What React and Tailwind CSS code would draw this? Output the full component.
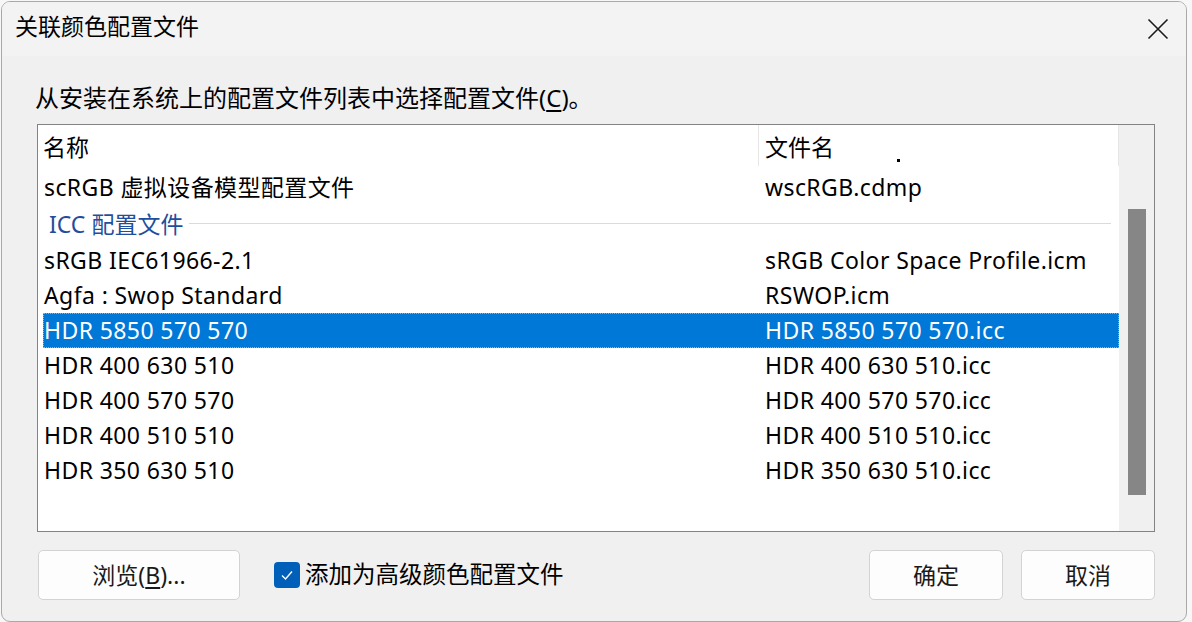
const rows = [
    { name: 'sRGB IEC61966-2.1', file: 'sRGB Color Space Profile.icm' },
    { name: 'Agfa : Swop Standard', file: 'RSWOP.icm' },
    { name: 'HDR 5850 570 570', file: 'HDR 5850 570 570.icc', selected: true },
    { name: 'HDR 400 630 510', file: 'HDR 400 630 510.icc' },
    { name: 'HDR 400 570 570', file: 'HDR 400 570 570.icc' },
    { name: 'HDR 400 510 510', file: 'HDR 400 510 510.icc' },
    { name: 'HDR 350 630 510', file: 'HDR 350 630 510.icc' },
];

function Row({ name, file, selected }) {
    return (
        <div
            className={
                'ml-[5px] flex h-[35px] items-center tracking-[0.4px] ' +
                (selected ? 'bg-[#0078d7] text-white outline-1 outline-dotted outline-[#7fb4e6] -outline-offset-1' : 'text-black')
            }
        >
            <div className="w-[722px] pl-[1px] whitespace-nowrap">{name}</div>
            <div className="whitespace-nowrap">{file}</div>
        </div>
    );
}

function Button({ children, className }) {
    return (
        <button className={'h-[50px] rounded-[5px] border border-[#d3d3d3] bg-[#fdfdfd] text-[23px] text-[#1a1a1a] ' + className}>
            {children}
        </button>
    );
}

export default function App() {
    return (
        <div
            className="w-[1192px] h-[622px] overflow-hidden bg-[#f7f7f7] pt-[1px] pl-[1px]"
            style={{ fontFamily: '"Noto Sans", "Noto Sans CJK SC", sans-serif' }}
        >
            <div className="w-[1186px] h-[621px] rounded-[9px] border border-[#a9a9a9] bg-[#f0f0f0] overflow-hidden flex flex-col">
                {/* title bar */}
                <div className="h-[54px] shrink-0 bg-[#f3f3f3] flex items-center justify-between pl-[13px] pr-[16px] pb-[5px]">
                    <span className="text-[23px] text-black leading-none">关联颜色配置文件</span>
                    <svg width="22" height="22" viewBox="0 0 22 22" className="mr-[1px] mt-[5px]">
                        <path d="M1.5 1.5 L20.5 20.5 M20.5 1.5 L1.5 20.5" stroke="#1a1a1a" strokeWidth="1.6" fill="none" />
                    </svg>
                </div>

                <div className="flex-1 flex flex-col pl-[35px] pr-[31px]">
                    <div className="mt-[27px] h-[30px] -ml-[2px] text-[24px] leading-[30px] text-black whitespace-nowrap">
                        从安装在系统上的配置文件列表中选择配置文件(<span className="underline underline-offset-[3px]">C</span>)。
                    </div>

                    {/* list box */}
                    <div className="mt-[11px] h-[408px] border border-[#838383] bg-white flex text-[23px]">
                        <div className="flex-1 flex flex-col">
                            {/* header */}
                            <div className="h-[41px] flex shrink-0">
                                <div className="w-[721px] pl-[5px] pt-[5px] border-r border-[#e6e6e6] text-black">名称</div>
                                <div className="flex-1 pl-[6px] pt-[5px] border-r border-[#e6e6e6] text-black relative">
                                    文件名
                                    <span className="absolute left-[138px] top-[34px] w-[3px] h-[3px] bg-black" />
                                </div>
                            </div>
                            <div className="h-[4px]" />
                            <Row name="scRGB 虚拟设备模型配置文件" file="wscRGB.cdmp" />
                            <div className="h-[38px] flex items-center pl-[11px] pr-[8px]">
                                <span className="text-[#1f4e9c] whitespace-nowrap">ICC 配置文件</span>
                                <div className="flex-1 h-px bg-[#d5dbe8] ml-[6px] mt-[-2px]" />
                            </div>
                            {rows.map((r) => (
                                <Row key={r.name} {...r} />
                            ))}
                        </div>
                        {/* scrollbar */}
                        <div className="w-[35px] bg-[#f0f0f0] pl-[9px] pt-[84px]">
                            <div className="w-[18px] h-[286px] bg-[#868686]" />
                        </div>
                    </div>

                    {/* bottom row */}
                    <div className="mt-[18px] flex items-center">
                        <Button className="w-[202px] ml-[1px]">
                            浏览(<span className="underline underline-offset-[3px]">B</span>)...
                        </Button>
                        <div className="ml-[34px] flex items-center">
                            <div className="w-[26px] h-[26px] rounded-[4px] bg-[#005fb8] flex items-center justify-center">
                                <svg width="14" height="14" viewBox="0 0 14 14">
                                    <path d="M2 7.5 L5.5 11 L12 3.5" stroke="white" strokeWidth="1.4" fill="none" />
                                </svg>
                            </div>
                            <span className="ml-[5px] text-[23.5px] text-black">添加为高级颜色配置文件</span>
                        </div>
                        <div className="flex-1" />
                        <Button className="w-[134px]">确定</Button>
                        <Button className="w-[134px] ml-[18px]">取消</Button>
                    </div>
                </div>
            </div>
        </div>
    );
}
